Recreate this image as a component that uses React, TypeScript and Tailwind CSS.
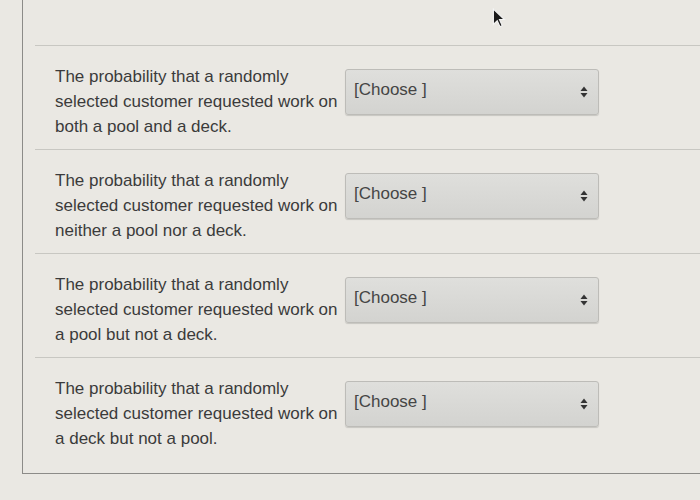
import React from "react";

const rows = [
  ["The probability that a randomly", "selected customer requested work on", "both a pool and a deck."],
  ["The probability that a randomly", "selected customer requested work on", "neither a pool nor a deck."],
  ["The probability that a randomly", "selected customer requested work on", "a pool but not a deck."],
  ["The probability that a randomly", "selected customer requested work on", "a deck but not a pool."],
];

function SelectBox() {
  return (
    <div className="mt-[5px] ml-[8px] w-[254px] h-[46px] rounded-[3px] border border-[#bdbcb8] bg-gradient-to-b from-[#dfdfdc] to-[#d3d3d0] shadow-[0_1px_1px_rgba(0,0,0,0.15)] flex items-center justify-between pl-[8px] pr-[10px]">
      <span className="text-[17px] text-[#454545] -mt-[4px]">[Choose ]</span>
      <svg width="8" height="12" viewBox="0 0 8 12">
        <path d="M4 0.5 L7.5 5 H0.5 Z" fill="#333" />
        <path d="M4 11.5 L7.5 7 H0.5 Z" fill="#333" />
      </svg>
    </div>
  );
}

export default function App() {
  return (
    <div
      className="relative w-[700px] h-[500px] overflow-hidden bg-[#eae8e3]"
      style={{ fontFamily: '"Liberation Sans", Arial, sans-serif' }}
    >
      <div className="ml-[22px] w-[678px] h-[474px] border-l border-b border-[#8c8b88] pt-[45px] pl-[12px]">
        {rows.map((lines, i) => (
          <div
            key={i}
            className="h-[104px] border-t border-[#c8c7c2] pl-[20px] pt-[18px] flex items-start"
          >
            <div className="w-[282px] text-[17px] leading-[25px] text-[#3b3b3b]">
              {lines.map((l, j) => (
                <div key={j} className="whitespace-nowrap">{l}</div>
              ))}
            </div>
            <SelectBox />
          </div>
        ))}
      </div>
      <svg className="absolute left-[492px] top-[8px]" width="16" height="22" viewBox="0 0 14 20">
        <path d="M1 1 L1 15 L4.5 11.5 L7 17 L9 16 L6.5 10.5 L11 10.5 Z" fill="#1a1a1a" stroke="#f5f5f5" strokeWidth="1" />
      </svg>
    </div>
  );
}
